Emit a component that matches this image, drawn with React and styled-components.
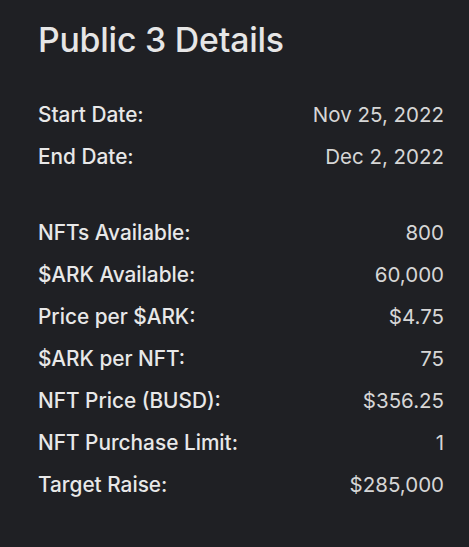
import styled, { createGlobalStyle } from "styled-components";

const GlobalStyle = createGlobalStyle`
  html, body {
    margin: 0;
    padding: 0;
    background: #1f2024;
  }
`;

const details = [
  [
    { label: "Start Date:", value: "Nov 25, 2022" },
    { label: "End Date:", value: "Dec 2, 2022" },
  ],
  [
    { label: "NFTs Available:", value: "800" },
    { label: "$ARK Available:", value: "60,000" },
    { label: "Price per $ARK:", value: "$4.75" },
    { label: "$ARK per NFT:", value: "75" },
    { label: "NFT Price (BUSD):", value: "$356.25" },
    { label: "NFT Purchase Limit:", value: "1" },
    { label: "Target Raise:", value: "$285,000" },
  ],
];

const App = () => {
  return (
    <>
      <GlobalStyle />
      <StCard>
        <StTitle>Public 3 Details</StTitle>
        {details.map((group, i) => (
          <StGroup key={i}>
            {group.map(item => (
              <StRow key={item.label}>
                <StLabel>{item.label}</StLabel>
                <StValue>{item.value}</StValue>
              </StRow>
            ))}
          </StGroup>
        ))}
      </StCard>
    </>
  );
};

export default App;

const StCard = styled.div`
  width: 469px;
  height: 547px;
  box-sizing: border-box;
  padding: 20px 25px 0 38px;
  background: #1f2024;
  display: flex;
  flex-direction: column;
  gap: 34px;
`;

const StTitle = styled.h1`
  margin: 0;
  font-family: Inter, "Noto Sans", sans-serif;
  font-size: 33.8px;
  font-weight: 500;
  line-height: 39px;
  color: #e6e6e6;
  letter-spacing: -0.2px;
`;

const StGroup = styled.div`
  display: flex;
  flex-direction: column;
`;

const StRow = styled.div`
  display: flex;
  justify-content: space-between;
  align-items: center;
  height: 42px;
`;

const StLabel = styled.span`
  font-family: Inter, "Noto Sans", sans-serif;
  font-size: 20.8px;
  font-weight: 500;
  color: #e8e8e8;
`;

const StValue = styled.span`
  font-family: Inter, "Noto Sans", sans-serif;
  font-size: 20.5px;
  font-weight: 400;
  color: #d6d6d6;
`;
